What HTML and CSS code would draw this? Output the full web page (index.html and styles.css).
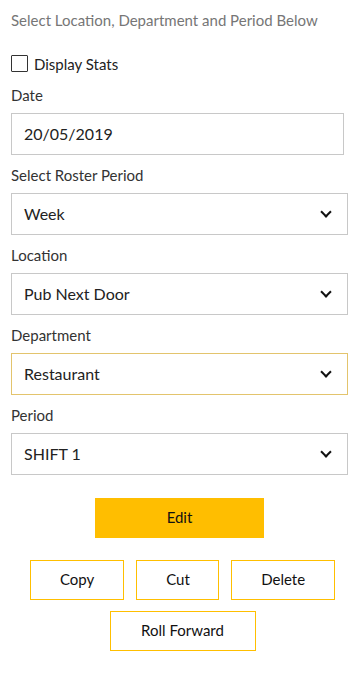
FILE: index.html
```html
<!DOCTYPE html>
<html lang="en">
  <head>
    <meta charset="UTF-8">
    <meta name="viewport" content="width=device-width, initial-scale=1.0">
    <title>Roster</title>
    <link rel="stylesheet" href="styles.css">
  </head>
  <body>
    <div id="contingut">
      <p class="intro">Select Location, Department and Period Below</p>

      <label class="check">
        <span class="box"></span>
        Display Stats
      </label>

      <div class="field">
        <div class="label">Date</div>
        <div class="input date">20/05/2019</div>
      </div>

      <div class="field">
        <div class="label">Select Roster Period</div>
        <div class="input select">Week<span class="chev"></span></div>
      </div>

      <div class="field">
        <div class="label">Location</div>
        <div class="input select">Pub Next Door<span class="chev"></span></div>
      </div>

      <div class="field">
        <div class="label">Department</div>
        <div class="input select focus">Restaurant<span class="chev"></span></div>
      </div>

      <div class="field">
        <div class="label">Period</div>
        <div class="input select">SHIFT 1<span class="chev"></span></div>
      </div>

      <div class="buttons">
        <button class="edit">Edit</button>
        <div class="row">
          <button class="outline">Copy</button>
          <button class="outline">Cut</button>
          <button class="outline">Delete</button>
        </div>
        <button class="outline">Roll Forward</button>
      </div>
    </div>
  </body>
</html>
```

FILE: styles.css
```css
  body {
    margin: 0;
    background: white;
    font-family: Lato, "Open Sans", sans-serif;
    color: #222;
  }

  #contingut{
    padding: 10px 11px 0 11px;
  }

  .intro{
    margin: 0;
    font-size: 15px;
    line-height: 20px;
    color: #767676;
  }

  .check{
    display: flex;
    align-items: center;
    gap: 6px;
    margin-top: 24px;
    height: 19px;
    font-size: 15px;
  }

  .box{
    width: 15px;
    height: 15px;
    border: 1.4px solid #333;
    border-radius: 1px;
  }

/* --------------- Camps ----------------- */

  .field{
    margin-top: 10px;
  }

  .check + .field{
    margin-top: 12px;
  }

  .label{
    font-size: 15px;
    line-height: 20px;
    color: #333;
    margin-bottom: 8px;
  }

  .input{
    display: flex;
    align-items: center;
    justify-content: space-between;
    height: 42px;
    box-sizing: border-box;
    padding: 0 17px 2px 12px;
    border: 1px solid #c8c8c8;
    font-size: 16px;
    color: #222;
  }

  .date{
    width: calc(100% - 4px);
  }

  .focus{
    border-color: #e3c46d;
  }

  .chev{
    width: 6px;
    height: 6px;
    border-right: 2.2px solid #111;
    border-bottom: 2.2px solid #111;
    transform: translateY(-1px) rotate(45deg);
  }

/* --------------- Botons ----------------- */

  .buttons{
    display: flex;
    flex-direction: column;
    align-items: center;
    margin-top: 23px;
  }

  button{
    font-family: inherit;
    font-size: 15px;
    color: #111;
    height: 40px;
    background: white;
    border: 1px solid #ffbf00;
    padding: 0 29px 2px;
    cursor: pointer;
  }

  .edit{
    width: 169px;
    background: #ffbe00;
    border: none;
  }

  .row{
    display: flex;
    gap: 12px;
    margin: 22px 0 11px 6px;
  }

  .row button:nth-child(2){
    width: 83px;
  }

  .buttons > .outline{
    width: 146px;
    margin-left: 6px;
  }
```
